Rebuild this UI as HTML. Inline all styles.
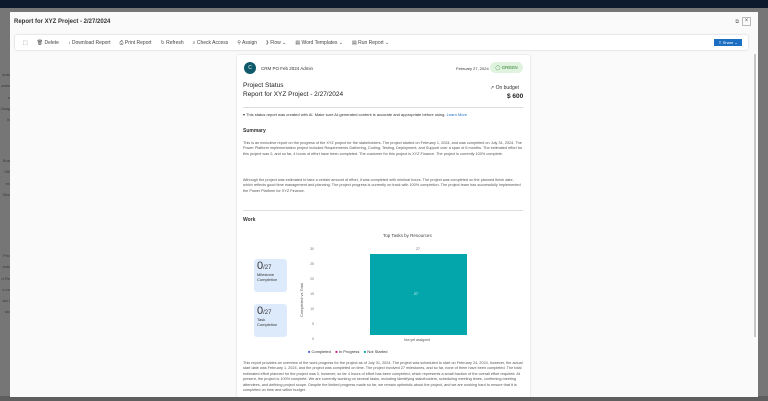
<!DOCTYPE html>
<html><head><style>
*{margin:0;padding:0;box-sizing:border-box}
body{width:768px;height:401px;overflow:hidden;background:#767676;font-family:"Liberation Sans",sans-serif;position:relative}
.top{position:absolute;left:0;top:0;width:768px;height:8px;background:#0d1a2d}
.dlg{position:absolute;left:10px;top:12px;width:748px;height:385px;background:#fafafa;overflow:hidden}
.title{position:absolute;left:4px;top:7px;font-size:6px;font-weight:bold;color:#333}
.tb{position:absolute;left:5px;top:23px;width:733px;height:15px;background:#fff;box-shadow:0 0 2px rgba(0,0,0,.2);border-radius:2px;font-size:5px;color:#444;display:flex;align-items:center;padding-left:8px}
.tb span{margin-right:9px}
.share{position:absolute;right:6px;top:4px;width:28px;height:7px;background:#1b6ec2;color:#fff;font-size:4px;text-align:center;line-height:7px}
.card{position:absolute;left:227px;top:43px;width:293px;height:360px;background:#fff;box-shadow:0 0 2px rgba(0,0,0,.15);border-radius:2px}
.sb{position:absolute;left:744px;top:42px;width:2px;height:283px;background:#c8c8c8}
.p{position:absolute;color:#333}
.sm{font-size:3.8px;line-height:5.4px;color:#555}
.ov{position:absolute;left:0;font-size:4px;color:#3a3a3a;line-height:11.3px;width:10px;overflow:hidden;white-space:nowrap}
</style></head><body>
<div class="top"></div>
<div class="ov" style="top:69px;direction:rtl">ards<br>aries<br>s<br>Usag<br>ls</div>
<div class="ov" style="top:155px;direction:rtl">Boa<br>Util<br>es<br>Mor</div>
<div class="ov" style="top:250px;direction:rtl">Pric<br>ects<br>d Re<br>s on<br>act I<br>oic</div>
<div style="position:absolute;left:0;top:396px;width:768px;height:5px;background:#5e5e5e"></div>
<div class="dlg">
<div class="title">Report for XYZ Project - 2/27/2024</div>
<div style="position:absolute;right:7px;top:5px;width:9px;height:9px;border:1px solid #bbb;font-size:6px;text-align:center;line-height:7px;color:#555">×</div>
<div style="position:absolute;right:19px;top:7px;font-size:5px;color:#777">⧉</div>
<div class="tb"><span>⬚</span><span>🗑 Delete</span><span>↓ Download Report</span><span>⎙ Print Report</span><span>↻ Refresh</span><span>⌕ Check Access</span><span>⚲ Assign</span><span>⟫ Flow ⌄</span><span>▤ Word Templates ⌄</span><span>▤ Run Report ⌄</span>
<div class="share">⇪ Share ⌄</div></div>
<div class="sb"></div>
<div class="card">
<div style="position:absolute;left:7px;top:7px;width:12px;height:12px;border-radius:50%;background:#0e5a6a;color:#fff;font-size:5px;text-align:center;line-height:12px">C</div>
<div class="p" style="left:24px;top:11px;font-size:4.5px">CRM PO Feb 2024 Admin</div>
<div class="p" style="left:219px;top:11px;font-size:4px">February 27, 2024</div>
<div class="p" style="left:253px;top:7px;width:33px;height:11px;border-radius:6px;background:#dff3df;color:#2d7d2d;font-size:4.5px;text-align:center;line-height:11px">◯ GREEN</div>
<div class="p" style="left:6px;top:27px;font-size:6.5px;color:#222">Project Status</div>
<div class="p" style="left:6px;top:36px;font-size:6.5px;color:#222">Report for XYZ Project - 2/27/2024</div>
<div class="p" style="left:253px;top:30px;font-size:5px">↗ On budget</div>
<div class="p" style="left:270px;top:38px;font-size:6.5px;font-weight:bold;color:#222">$ 600</div>
<div class="p" style="left:6px;top:52px;width:280px;border-top:1px solid #ddd"></div>
<div class="p" style="left:6px;top:57px;font-size:4px">▾ This status report was created with AI. Make sure AI-generated content is accurate and appropriate before using. <span style="color:#1b6ec2">Learn More</span></div>
<div class="p" style="left:6px;top:73px;font-size:5px;font-weight:bold">Summary</div>
<div class="p sm" style="left:6px;top:86px;width:280px">This is an executive report on the progress of the XYZ project for the stakeholders. The project started on February 1, 2024, and was completed on July 31, 2024. The Power Platform implementation project included Requirements Gathering, Coding, Testing, Deployment, and Support over a span of 6 months. The estimated effort for this project was 0, and so far, 4 hours of effort have been completed. The customer for this project is XYZ Finance. The project is currently 100% complete.</div>
<div class="p sm" style="left:6px;top:123px;width:280px">Although the project was estimated to take a certain amount of effort, it was completed with minimal hours. The project was completed on the planned finish date, which reflects good time management and planning. The project progress is currently on track with 100% completion. The project team has successfully implemented the Power Platform for XYZ Finance.</div>
<div class="p" style="left:6px;top:155px;width:280px;border-top:1px solid #ddd"></div>
<div class="p" style="left:6px;top:162px;font-size:5px;font-weight:bold">Work</div>
<div class="p" style="left:146px;top:178px;font-size:4.5px;color:#444">Top Tasks by Resources</div>
<div class="p" style="left:17px;top:204px;width:33px;height:33px;background:#ddeafc;border-radius:3px;padding:2px 3px;font-size:4px;color:#333;line-height:5px"><span style="font-size:11px;line-height:11px">0</span><span style="font-size:6px">/27</span><br>Milestone<br>Completion</div>
<div class="p" style="left:17px;top:249px;width:33px;height:33px;background:#ddeafc;border-radius:3px;padding:2px 3px;font-size:4px;color:#333;line-height:5px"><span style="font-size:11px;line-height:11px">0</span><span style="font-size:6px">/27</span><br>Task<br>Completion</div>
<div class="p" style="left:62px;top:262px;font-size:4px;transform:rotate(-90deg);transform-origin:left top;color:#555">Completed vs Total</div>
<div class="p" style="left:71px;top:187px;font-size:3.5px;color:#777;line-height:15px;text-align:right;width:6px">30<br>25<br>20<br>15<br>10<br>5<br>0</div>
<div class="p" style="left:133px;top:199px;width:97px;height:81px;background:#03a6ab"></div>
<div class="p" style="left:179px;top:192px;font-size:3.5px;color:#666">27</div>
<div class="p" style="left:177px;top:237px;font-size:3.5px;color:#fff">27</div>
<div class="p" style="left:167px;top:283px;font-size:3.5px;color:#555">Not yet assigned</div>
<div class="p" style="left:71px;top:294px;font-size:4px"><span style="color:#5566dd">■</span> Completed &nbsp;&nbsp; <span style="color:#d4168e">■</span> In Progress &nbsp;&nbsp; <span style="color:#03a6ab">■</span> Not Started</div>
<div class="p sm" style="left:6px;top:306px;width:280px">This report provides an overview of the work progress for the project as of July 31, 2024. The project was scheduled to start on February 24, 2024, however, the actual start date was February 1, 2024, and the project was completed on time. The project involved 27 milestones, and so far, none of them have been completed. The total estimated effort planned for the project was 0, however, so far 4 hours of effort has been completed, which represents a small fraction of the overall effort required. At present, the project is 100% complete. We are currently working on several tasks, including identifying stakeholders, scheduling meeting times, confirming meeting attendees, and defining project scope. Despite the limited progress made so far, we remain optimistic about the project, and we are working hard to ensure that it is completed on time and within budget.</div>
</div>
</div>
</body></html>
